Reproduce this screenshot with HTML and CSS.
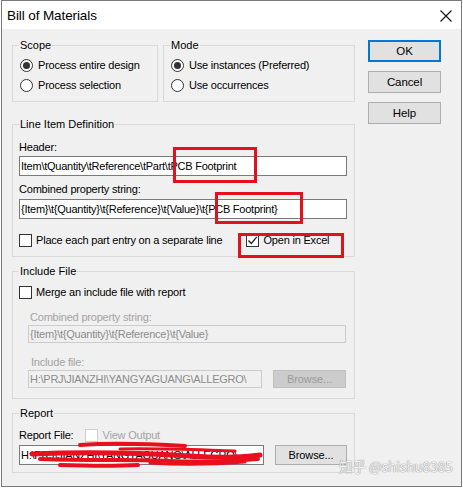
FILE: index.html
```html
<!DOCTYPE html>
<html lang="en">
<head>
    <meta charset="UTF-8">
    <title>Bill of Materials</title>
    <link rel="stylesheet" href="styles.css">
</head>
<body>
    <div class="window">
        <div class="titlebar">
            <span class="title">Bill of Materials</span>
            <svg class="close" width="12" height="12" viewBox="0 0 12 12">
                <path d="M0.5 0.5 L11.5 11.5 M11.5 0.5 L0.5 11.5" stroke="#111" stroke-width="1.1" fill="none"/>
            </svg>
        </div>
        <div class="client">
            <div class="main">
                <div class="top-row">
                    <fieldset class="group scope">
                        <legend>Scope</legend>
                        <div class="opt"><span class="radio on"></span>Process entire design</div>
                        <div class="opt"><span class="radio"></span>Process selection</div>
                    </fieldset>
                    <fieldset class="group mode">
                        <legend>Mode</legend>
                        <div class="opt"><span class="radio on"></span>Use instances (Preferred)</div>
                        <div class="opt"><span class="radio"></span>Use occurrences</div>
                    </fieldset>
                </div>

                <fieldset class="group line-item">
                    <legend>Line Item Definition</legend>
                    <div class="lbl">Header:</div>
                    <div class="field full">Item\tQuantity\tReference\tPart\tPCB Footprint</div>
                    <div class="lbl second">Combined property string:</div>
                    <div class="field full tight">{Item}\t{Quantity}\t{Reference}\t{Value}\t{PCB Footprint}</div>
                    <div class="check-row">
                        <div class="opt"><span class="check"></span>Place each part entry on a separate line</div>
                        <div class="opt excel"><span class="check on">
                            <svg width="11" height="11" viewBox="0 0 11 11"><path d="M1.5 5.5 L4.3 8.5 L9.8 1.8" stroke="#222" stroke-width="1.3" fill="none"/></svg>
                        </span>Open in Excel</div>
                    </div>
                </fieldset>

                <fieldset class="group include">
                    <legend>Include File</legend>
                    <div class="opt"><span class="check"></span>Merge an include file with report</div>
                    <div class="sub">
                        <div class="lbl dim">Combined property string:</div>
                        <div class="field off">{Item}\t{Quantity}\t{Reference}\t{Value}</div>
                        <div class="lbl dim gap">Include file:</div>
                        <div class="file-row">
                            <div class="field off path">H:\PRJ\JIANZHI\YANGYAGUANG\ALLEGRO\</div>
                            <div class="btn disabled">Browse...</div>
                        </div>
                    </div>
                </fieldset>

                <fieldset class="group report">
                    <legend>Report</legend>
                    <div class="report-head">
                        <span class="lbl">Report File:</span>
                        <div class="opt dim"><span class="check off"></span>View Output</div>
                    </div>
                    <div class="file-row report-row">
                        <div class="field path">H:\PRJ\JIANZHI\YANGYAGUANG\ALLEGRO\</div>
                        <div class="btn">Browse...</div>
                    </div>
                </fieldset>
            </div>

            <div class="buttons">
                <div class="btn default">OK</div>
                <div class="btn">Cancel</div>
                <div class="btn">Help</div>
            </div>
        </div>

        <!-- annotations drawn over the dialog -->
        <div class="mark m1"></div>
        <div class="mark m2"></div>
        <div class="mark m3"></div>
        <svg class="scribble" width="250" height="34" viewBox="0 0 250 34">
            <g stroke="#e8101c" stroke-linecap="round" fill="none">
                <path d="M12 15 C60 13 120 14 170 17 S230 17 240 16" stroke-width="5"/>
                <path d="M60 6 C90 4 130 5 165 7" stroke-width="4"/>
                <path d="M20 20 C70 22 120 20 150 22 C190 24 220 21 238 20" stroke-width="4"/>
                <path d="M40 26 C70 27 100 27 118 26" stroke-width="4"/>
                <path d="M130 24 C160 26 200 25 225 23" stroke-width="3"/>
                <path d="M100 10 C140 9 180 11 215 12" stroke-width="3"/>
            </g>
        </svg>
        <div class="watermark">知乎 @shishu8385</div>
    </div>
</body>
</html>
```

FILE: styles.css
```css
body {
    margin: 0;
    font-family: "Liberation Sans", Arial, sans-serif;
    font-size: 11px;
    color: #000;
    background: #fff;
}
.window {
    position: relative;
    width: 459px;
    height: 485px;
    margin-left: 1px;
    border: 1px solid #7a7a7a;
    background: #f0f0f0;
    overflow: hidden;
}
.titlebar {
    height: 28px;
    background: #fff;
    display: flex;
    align-items: center;
    justify-content: space-between;
    padding: 0 9px 0 5px;
}
.title {
    font-size: 13.5px;
    letter-spacing: -0.1px;
    margin-top: 1px;
}
.close {
    margin-top: 2px;
}
.client {
    display: flex;
    padding: 9px 0 0 10px;
}
.main {
    width: 343px;
}
.top-row {
    display: flex;
    gap: 5px;
}
.group {
    margin: 0;
    padding: 3px 7px 6px 6px;
    border: 1px solid #d9d9d9;
    min-width: 0;
}
legend {
    padding: 0 1px;
    line-height: 14px;
}
.scope {
    width: 146px;
    box-sizing: border-box;
}
.mode {
    flex: 1;
}
.opt {
    display: flex;
    align-items: center;
    height: 20px;
    letter-spacing: -0.2px;
    white-space: nowrap;
}
.radio {
    width: 11px;
    height: 11px;
    border: 1px solid #333;
    border-radius: 50%;
    background: #fff;
    margin: 0 5px 0 1px;
    position: relative;
}
.radio.on::after {
    content: "";
    position: absolute;
    left: 2px;
    top: 2px;
    width: 7px;
    height: 7px;
    border-radius: 50%;
    background: #333;
}
.check {
    width: 11px;
    height: 11px;
    border: 1px solid #333;
    background: #fff;
    margin-right: 4px;
    display: flex;
    align-items: center;
    justify-content: center;
}
.check.off {
    border-color: #cfcfcf;
}
.lbl {
    line-height: 14px;
    letter-spacing: -0.2px;
}
.dim {
    color: #a3a3a3;
}
.field {
    height: 18px;
    border: 1px solid #7a7a7a;
    background: #fff;
    line-height: 18px;
    padding-left: 1px;
    white-space: nowrap;
    overflow: hidden;
    letter-spacing: -0.25px;
}
.field.off {
    height: 16px;
    line-height: 16px;
    border-color: #cccccc;
    background: #f0f0f0;
    color: #8c8c8c;
}
.line-item {
    margin-top: 15px;
    padding-top: 9px;
    padding-bottom: 9px;
}
.line-item .field {
    margin-top: 2px;
}
.line-item .second {
    margin-top: 6px;
}
.line-item .tight {
    margin-top: 3px;
}
.check-row {
    display: flex;
    margin-top: 14px;
}
.check-row .opt {
    height: 14px;
}
.excel {
    margin-left: 24px;
}
.include {
    margin-top: 7px;
    padding-top: 5px;
    padding-bottom: 10px;
}
.include > .opt {
    height: 18px;
}
.sub {
    padding-left: 9px;
    padding-right: 1px;
}
.sub .lbl {
    margin-top: 9px;
    padding-left: 2px;
}
.sub .gap {
    margin-top: 12px;
    padding-left: 3px;
}
.sub .field {
    margin-top: 1px;
}
.file-row {
    display: flex;
    gap: 11px;
}
.file-row .path {
    flex: 1;
}
.include .file-row {
    margin-top: 1px;
}
.include .file-row .field {
    margin-top: 0;
}
.include .btn {
    width: 71px;
    height: 16px;
}
.report {
    margin-top: 7px;
    padding-top: 8px;
    padding-bottom: 7px;
}
.report-head {
    display: flex;
    align-items: center;
    height: 14px;
}
.report-head .opt {
    height: 14px;
    margin-left: 12px;
}
.report-row {
    margin-top: 3px;
}
.report-row .btn {
    width: 70px;
    height: 18px;
}
.btn {
    box-sizing: content-box;
    border: 1px solid #adadad;
    background: #e1e1e1;
    display: flex;
    align-items: center;
    justify-content: center;
    letter-spacing: -0.1px;
}
.btn.disabled {
    border-color: #bfbfbf;
    background: #cccccc;
    color: #9a9a9a;
}
.buttons {
    display: flex;
    flex-direction: column;
    gap: 9px;
    margin: 2px 0 0 13px;
}
.buttons .btn {
    width: 71px;
    height: 20px;
    font-size: 11.5px;
}
.buttons .default {
    border: 2px solid #0078d7;
    width: 69px;
    height: 18px;
}
.mark {
    position: absolute;
    border: 3px solid #e3101e;
    box-sizing: border-box;
}
.m1 {
    left: 171px;
    top: 146px;
    width: 84px;
    height: 36px;
}
.m2 {
    left: 213px;
    top: 191px;
    width: 88px;
    height: 32px;
}
.m3 {
    left: 236px;
    top: 232px;
    width: 106px;
    height: 25px;
}
.scribble {
    position: absolute;
    left: 18px;
    top: 438px;
}
.watermark {
    position: absolute;
    left: 337px;
    top: 455px;
    font-family: "Noto Sans CJK SC", "Liberation Sans", sans-serif;
    font-size: 13.5px;
    color: rgba(255, 255, 255, 0.92);
    text-shadow: 0 0 1px #8a8a8a, 0 0 1px #8a8a8a;
    white-space: nowrap;
}
```
